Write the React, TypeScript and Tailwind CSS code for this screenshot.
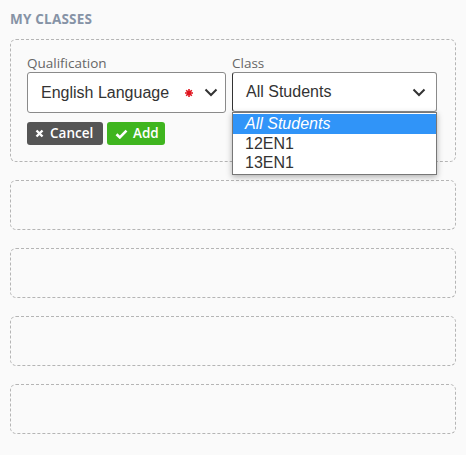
import React from 'react';

const options = ['All Students', '12EN1', '13EN1'];

function Chevron() {
    return (
        <svg width="14" height="9" viewBox="0 0 14 9" fill="none">
            <path d="M1.5 1.5 7 7l5.5-5.5" stroke="#333" strokeWidth="2" />
        </svg>
    );
}

function Asterisk() {
    return (
        <svg width="8" height="8" viewBox="0 0 8 8">
            <g stroke="#e0141e" strokeWidth="1.6">
                <path d="M4 0v8M0 4h8M1.2 1.2l5.6 5.6M6.8 1.2 1.2 6.8" />
            </g>
        </svg>
    );
}

function EmptySlot() {
    return (
        <div className="h-[50px] rounded-md border border-dashed border-[#b5b5b5]" />
    );
}

export default function App() {
    return (
        <div className="h-[455px] w-[466px] bg-[#fafafa] pl-[10px] pr-[10px] font-['Open_Sans',sans-serif]">
            <h2 className="pt-[10px] text-[13.5px] font-bold leading-[18px] tracking-[0.2px] text-[#8693a6]">
                MY CLASSES
            </h2>

            <div className="mt-[11px] flex flex-col gap-[18px]">
                <div className="rounded-md border border-dashed border-[#b5b5b5] pb-[16px] pl-[16px] pt-[14px]">
                    <div className="flex gap-[6px]">
                        <div className="flex flex-col">
                            <label className="text-[13.5px] leading-[18px] text-[#666]">
                                Qualification
                            </label>
                            <div className="flex h-[41px] w-[199px] items-center rounded-[3px] border border-[#8a8a8a] bg-white pl-[13px] pr-[7px] font-['Liberation_Sans',Arial,sans-serif] text-[16px] text-[#333]">
                                <span className="flex-1">English Language</span>
                                <span className="mr-[11px] flex">
                                    <Asterisk />
                                </span>
                                <Chevron />
                            </div>
                        </div>
                        <div className="flex flex-col">
                            <label className="text-[13.5px] leading-[18px] text-[#666]">
                                Class
                            </label>
                            <div className="relative">
                                <div className="flex h-[40px] w-[205px] items-center rounded-[3px] border border-[#8a8a8a] border-l-[#333] bg-white pl-[13px] pr-[10px] font-['Liberation_Sans',Arial,sans-serif] text-[16px] text-[#333]">
                                    <span className="flex-1">All Students</span>
                                    <Chevron />
                                </div>
                                <ul className="absolute left-0 top-full z-10 w-[205px] border border-[#777] bg-white py-[1px] font-['Liberation_Sans',Arial,sans-serif] text-[16px] leading-[19.5px] text-[#333] shadow-[0_2px_6px_rgba(0,0,0,0.3)]">
                                    {options.map((o, i) => (
                                        <li
                                            key={o}
                                            className={
                                                i === 0
                                                    ? 'bg-[#3094f8] pl-[12px] italic text-white'
                                                    : 'pl-[12px]'
                                            }
                                        >
                                            {o}
                                        </li>
                                    ))}
                                </ul>
                            </div>
                        </div>
                    </div>

                    <div className="mt-[9px] flex gap-[4px]">
                        <button className="flex h-[23px] w-[76px] items-center gap-[6px] rounded-[3px] bg-[#555] pl-[8px] text-[13.5px] font-semibold text-white">
                            <svg width="9" height="9" viewBox="0 0 9 9">
                                <path d="M1.5 1.5l6 6M7.5 1.5l-6 6" stroke="#fff" strokeWidth="2.4" />
                            </svg>
                            Cancel
                        </button>
                        <button className="flex h-[23px] w-[58px] items-center gap-[5px] rounded-[3px] bg-[#3fb51f] pl-[8px] text-[13.5px] font-semibold text-white">
                            <svg width="13" height="10" viewBox="0 0 13 10">
                                <path d="M1.5 5.2 4.8 8.4 11.5 1.6" stroke="#fff" strokeWidth="2.6" fill="none" />
                            </svg>
                            Add
                        </button>
                    </div>
                </div>

                <EmptySlot />
                <EmptySlot />
                <EmptySlot />
                <EmptySlot />
            </div>
        </div>
    );
}
